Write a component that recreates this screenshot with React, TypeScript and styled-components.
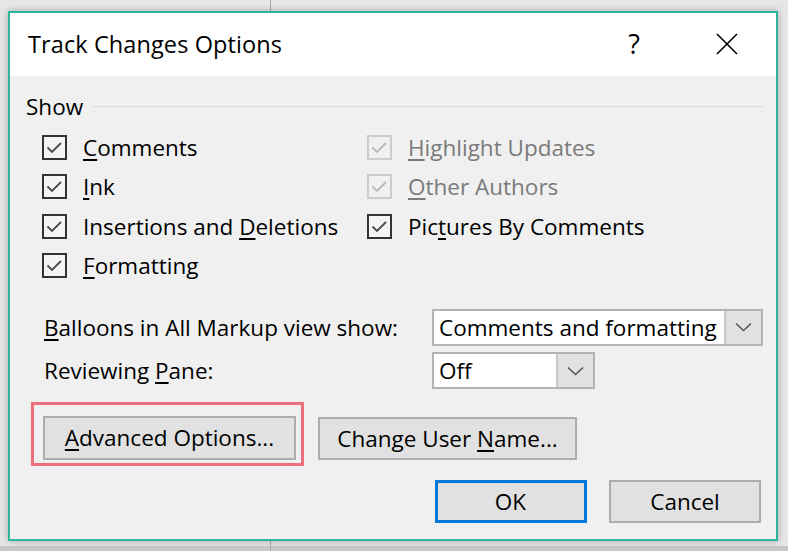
import React from "react";
import styled, { createGlobalStyle } from "styled-components";

const GlobalStyle = createGlobalStyle`
  html, body { margin: 0; padding: 0; }
  body {
    width: 788px;
    height: 551px;
    overflow: hidden;
    background: #e7e7e7;
    font-family: "Open Sans", "Noto Sans", sans-serif;
  }
`;

const Screen = styled.div`
  width: 788px;
  height: 551px;
  box-sizing: border-box;
  padding: 11px 10px 10px 8px;
  background:
    linear-gradient(#a8a8a8, #a8a8a8) 270px 0 / 1px 12px no-repeat,
    linear-gradient(#a8a8a8, #a8a8a8) 270px 541px / 1px 10px no-repeat,
    linear-gradient(#c8c8c8, #c8c8c8) 0 546px / 100% 5px no-repeat,
    #e6e6e6;
`;

const Dialog = styled.div`
  width: 770px;
  height: 530px;
  box-sizing: border-box;
  border: 2px solid #2eb69c;
  background: #f0f0f0;
  box-shadow: 0 0 7px rgba(0, 0, 0, 0.28);
  display: flex;
  flex-direction: column;
  color: #000;
`;

const TitleBar = styled.div`
  height: 61px;
  flex: none;
  background: #fff;
  display: flex;
  align-items: center;
  padding: 0 38px 2px 18px;
`;

const Title = styled.div`
  flex: 1;
  font-size: 23.5px;
  letter-spacing: 0.1px;
`;

const HelpGlyph = styled.span`
  font-size: 27px;
  font-weight: 400;
  line-height: 1;
  margin-right: 76px;
`;

const Body = styled.div`
  flex: 1;
  display: flex;
  flex-direction: column;
  padding: 16px 13px 0 16px;
  font-size: 22.5px;
`;

const GroupHeader = styled.div`
  display: flex;
  align-items: center;
  height: 28px;
`;

const Rule = styled.div`
  flex: 1;
  height: 1px;
  margin-left: 10px;
  background: #dadada;
`;

const CheckGrid = styled.div`
  display: grid;
  grid-template-columns: 325px 1fr;
  grid-auto-rows: 39.3px;
  margin: 8px 0 0 16px;
`;

const CheckItem = styled.div<{ $disabled?: boolean }>`
  display: flex;
  align-items: center;
  gap: 16px;
  color: ${(p) => (p.$disabled ? "#7a7a7a" : "#000")};
`;

const Box = styled.span<{ $disabled?: boolean }>`
  width: 25px;
  height: 25px;
  flex: none;
  box-sizing: border-box;
  border: 2px solid ${(p) => (p.$disabled ? "#cccccc" : "#333333")};
  background: ${(p) => (p.$disabled ? "#f0f0f0" : "#f4f4f4")};
  display: flex;
  align-items: center;
  justify-content: center;
`;

const Key = styled.span`
  text-decoration: underline;
  text-decoration-thickness: 1.5px;
  text-underline-offset: 3px;
`;

const FieldGrid = styled.div`
  display: grid;
  grid-template-columns: 388px auto;
  row-gap: 6.5px;
  align-items: center;
  margin: 23.5px 0 0 18px;
`;

const Select = styled.div<{ $width: number }>`
  width: ${(p) => p.$width}px;
  height: 37px;
  box-sizing: border-box;
  border: 2px solid #b3b3b3;
  background: #fff;
  display: flex;
`;

const SelectValue = styled.div`
  flex: 1;
  padding-left: 5px;
  line-height: 33px;
  white-space: nowrap;
  overflow: hidden;
`;

const SelectButton = styled.div`
  width: 37px;
  flex: none;
  box-sizing: border-box;
  background: #e1e1e1;
  border-left: 2px solid #c9c9c9;
  display: flex;
  align-items: center;
  justify-content: center;
`;

const ButtonRow = styled.div`
  display: flex;
  align-items: flex-start;
  margin: 12.5px 0 0 5px;
`;

const FocusFrame = styled.div`
  border: 3px solid #ec6f7d;
  padding: 11px 5px 3px 9px;
`;

const Button = styled.button<{ $width: number; $height: number; $default?: boolean }>`
  width: ${(p) => p.$width}px;
  height: ${(p) => p.$height}px;
  box-sizing: border-box;
  padding: 0;
  background: #e1e1e1;
  border: ${(p) => (p.$default ? "3px solid #0078d7" : "2px solid #adadad")};
  font-family: inherit;
  font-size: 22.5px;
  color: #000;
  display: flex;
  align-items: center;
  justify-content: center;
`;

const SideButton = styled(Button)`
  margin: 15px 0 0 14px;
`;

const Footer = styled.div`
  display: flex;
  justify-content: flex-end;
  gap: 22.5px;
  margin-top: 14px;
  padding-right: 2px;
`;

const Check = ({ disabled }: { disabled?: boolean }) => (
  <svg width="21" height="21" viewBox="0 0 21 21">
    <path
      d="M3.5 10.5 L8 15 L17 6"
      fill="none"
      stroke={disabled ? "#b9b9b9" : "#4a4a4a"}
      strokeWidth="1.8"
    />
  </svg>
);

const Chevron = () => (
  <svg width="17" height="10" viewBox="0 0 17 10">
    <path d="M1 1.5 L8.5 8.5 L16 1.5" fill="none" stroke="#555" strokeWidth="1.6" />
  </svg>
);

const CloseIcon = () => (
  <svg width="22" height="22" viewBox="0 0 22 22">
    <path d="M1 1 L21 21 M21 1 L1 21" stroke="#000" strokeWidth="1.6" />
  </svg>
);

type Item = { pre?: string; key: string; post: string; disabled?: boolean };

const items: (Item | null)[] = [
  { key: "C", post: "omments" },
  { key: "H", post: "ighlight Updates", disabled: true },
  { key: "I", post: "nk" },
  { key: "O", post: "ther Authors", disabled: true },
  { pre: "Insertions and ", key: "D", post: "eletions" },
  { pre: "Pic", key: "t", post: "ures By Comments" },
  { key: "F", post: "ormatting" },
  null,
];

export default function App() {
  return (
    <>
      <GlobalStyle />
      <Screen>
        <Dialog>
          <TitleBar>
            <Title>Track Changes Options</Title>
            <HelpGlyph>?</HelpGlyph>
            <CloseIcon />
          </TitleBar>
          <Body>
            <GroupHeader>
              <span>Show</span>
              <Rule />
            </GroupHeader>
            <CheckGrid>
              {items.map((it, i) =>
                it ? (
                  <CheckItem key={i} $disabled={it.disabled}>
                    <Box $disabled={it.disabled}>
                      <Check disabled={it.disabled} />
                    </Box>
                    <span>
                      {it.pre}
                      <Key>{it.key}</Key>
                      {it.post}
                    </span>
                  </CheckItem>
                ) : (
                  <span key={i} />
                )
              )}
            </CheckGrid>
            <FieldGrid>
              <span>
                <Key>B</Key>alloons in All Markup view show:
              </span>
              <Select $width={331}>
                <SelectValue>Comments and formatting</SelectValue>
                <SelectButton>
                  <Chevron />
                </SelectButton>
              </Select>
              <span>
                Reviewing <Key>P</Key>ane:
              </span>
              <Select $width={163}>
                <SelectValue>Off</SelectValue>
                <SelectButton>
                  <Chevron />
                </SelectButton>
              </Select>
            </FieldGrid>
            <ButtonRow>
              <FocusFrame>
                <Button $width={253} $height={44}>
                  <span>
                    <Key>A</Key>dvanced Options...
                  </span>
                </Button>
              </FocusFrame>
              <SideButton $width={259} $height={43}>
                <span>
                  Change User <Key>N</Key>ame...
                </span>
              </SideButton>
            </ButtonRow>
            <Footer>
              <Button $width={152} $height={43.5} $default>
                OK
              </Button>
              <Button $width={152} $height={43.5}>
                Cancel
              </Button>
            </Footer>
          </Body>
        </Dialog>
      </Screen>
    </>
  );
}
